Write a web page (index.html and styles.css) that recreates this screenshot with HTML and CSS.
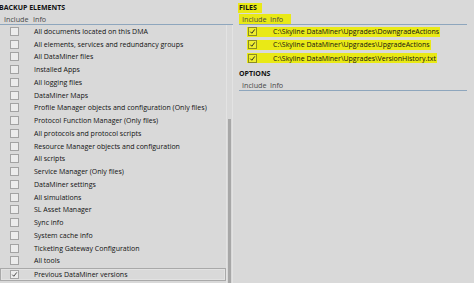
FILE: index.html
```html
<!DOCTYPE html>
<html>
<head>
<meta charset="utf-8">
<link rel="stylesheet" href="styles.css">
</head>
<body>
<div class="page">
  <section class="left">
    <div class="title title-left">BACKUP ELEMENTS</div>
    <div class="cols cols-left"><span class="c-inc">Include</span><span class="c-info">Info</span></div>
    <div class="listwrap">
      <div class="list">
        <div class="row"><span class="box"></span><span class="txt">All documents located on this DMA</span></div>
        <div class="row"><span class="box"></span><span class="txt">All elements, services and redundancy groups</span></div>
        <div class="row"><span class="box"></span><span class="txt">All DataMiner files</span></div>
        <div class="row"><span class="box"></span><span class="txt">Installed Apps</span></div>
        <div class="row"><span class="box"></span><span class="txt">All logging files</span></div>
        <div class="row"><span class="box"></span><span class="txt">DataMiner Maps</span></div>
        <div class="row"><span class="box"></span><span class="txt">Profile Manager objects and configuration (Only files)</span></div>
        <div class="row"><span class="box"></span><span class="txt">Protocol Function Manager (Only files)</span></div>
        <div class="row"><span class="box"></span><span class="txt">All protocols and protocol scripts</span></div>
        <div class="row"><span class="box"></span><span class="txt">Resource Manager objects and configuration</span></div>
        <div class="row"><span class="box"></span><span class="txt">All scripts</span></div>
        <div class="row"><span class="box"></span><span class="txt">Service Manager (Only files)</span></div>
        <div class="row"><span class="box"></span><span class="txt">DataMiner settings</span></div>
        <div class="row"><span class="box"></span><span class="txt">All simulations</span></div>
        <div class="row"><span class="box"></span><span class="txt">SL Asset Manager</span></div>
        <div class="row"><span class="box"></span><span class="txt">Sync info</span></div>
        <div class="row"><span class="box"></span><span class="txt">System cache info</span></div>
        <div class="row"><span class="box"></span><span class="txt">Ticketing Gateway Configuration</span></div>
        <div class="row"><span class="box"></span><span class="txt">All tools</span></div>
        <div class="row selected"><span class="box"><svg viewBox="0 0 8 8" class="chk"><path d="M1.5 4.2 L3.2 6 L6.6 1.6" fill="none" stroke="#333" stroke-width="1"/></svg></span><span class="txt">Previous DataMiner versions</span></div>
      </div>
      <div class="track"><div class="thumb"></div></div>
    </div>
  </section>
  <section class="right">
    <div class="title"><span class="hl hl-title">FILES</span></div>
    <div class="cols cols-right hl-cols"><span class="c-inc">Include</span><span class="c-info">Info</span></div>
    <div class="files">
      <div class="frow"><span class="fband"><span class="box ybox"><svg viewBox="0 0 8 8" class="chk"><path d="M1.5 4.2 L3.2 6 L6.6 1.6" fill="none" stroke="#222" stroke-width="1.1"/></svg></span><span class="ftxt">C:\Skyline DataMiner\Upgrades\DowngradeActions</span></span></div>
      <div class="frow"><span class="fband"><span class="box ybox"><svg viewBox="0 0 8 8" class="chk"><path d="M1.5 4.2 L3.2 6 L6.6 1.6" fill="none" stroke="#222" stroke-width="1.1"/></svg></span><span class="ftxt">C:\Skyline DataMiner\Upgrades\UpgradeActions</span></span></div>
      <div class="frow"><span class="fband"><span class="box ybox"><svg viewBox="0 0 8 8" class="chk"><path d="M1.5 4.2 L3.2 6 L6.6 1.6" fill="none" stroke="#222" stroke-width="1.1"/></svg></span><span class="ftxt">C:\Skyline DataMiner\Upgrades\VersionHistory.txt</span></span></div>
    </div>
    <div class="title title-opt">OPTIONS</div>
    <div class="cols cols-right cols-opt"><span class="c-inc">Include</span><span class="c-info">Info</span></div>
  </section>
</div>
</body>
</html>
```
FILE: styles.css
```css
html, body {
  margin: 0;
  padding: 0;
}
body {
  width: 474px;
  height: 283px;
  overflow: hidden;
  background: #d9d9d9;
  font-family: "Open Sans", "Noto Sans", sans-serif;
  font-size: 7px;
  color: #111;
}
.page {
  display: flex;
  height: 283px;
  overflow: hidden;
}
.left {
  width: 233px;
  display: flex;
  flex-direction: column;
}
.right {
  margin-left: 6px;
  width: 228px;
  display: flex;
  flex-direction: column;
}
.title {
  font-weight: 700;
  font-size: 7px;
  height: 10px;
  line-height: 10px;
  margin-top: 3px;
  color: #111;
}
.title-left {
  margin-left: -1px;
}
.title-opt {
  margin-top: 4px;
}
.hl {
  background: #e9e916;
}
.hl-title {
  display: inline-block;
  width: 23px;
  padding-left: 1px;
  margin-left: -1px;
}
.cols {
  display: flex;
  height: 10px;
  line-height: 10px;
  color: #484848;
  border-bottom: 1px solid #8ea6bd;
  margin-top: 1px;
  font-size: 7.2px;
}
.cols-left {
  padding-left: 4px;
}
.cols-left .c-inc {
  width: 29px;
}
.cols-right {
  padding-left: 3px;
}
.cols-right .c-inc {
  width: 28px;
}
.hl-cols {
  background: linear-gradient(#e9e916, #e9e916) no-repeat 0 0 / 52px 10px;
}
.listwrap {
  display: flex;
  flex: 1;
  min-height: 0;
}
.list {
  width: 226px;
}
.row {
  height: 12.75px;
  display: flex;
  align-items: center;
  box-sizing: border-box;
}
.row.selected {
  border: 1px solid #a9a9a9;
  box-shadow: inset 0 0 0 1px #e2e2e2;
  margin-top: 0.5px;
  height: 13px;
}
.box {
  width: 7px;
  height: 7px;
  border: 1px solid #a3a3a3;
  background: #ececec;
  margin-left: 10px;
  margin-right: 15px;
  flex: none;
  display: flex;
}
.row.selected .box {
  margin-left: 9px;
}
.chk {
  width: 7px;
  height: 7px;
}
.txt {
  white-space: nowrap;
}
.track {
  width: 7px;
  border-left: 1px solid #e3e3e3;
  border-right: 1px solid #e3e3e3;
  box-sizing: border-box;
  display: flex;
  flex-direction: column;
  align-items: center;
}
.thumb {
  width: 3px;
  margin-top: 94px;
  background: #a7a7a7;
  flex: 1;
}
.frow {
  height: 13.3px;
  display: flex;
  align-items: center;
}
.fband {
  display: flex;
  align-items: center;
  background: #e9e916;
  height: 10px;
  margin-left: 8px;
  padding-left: 1px;
  padding-right: 1px;
}
.ybox {
  margin-left: 0;
  margin-right: 16px;
  background: #eeee30;
  border-color: #8d8d20;
}
.ftxt {
  white-space: nowrap;
}
.cols-opt {
  margin-top: 1px;
}
```
